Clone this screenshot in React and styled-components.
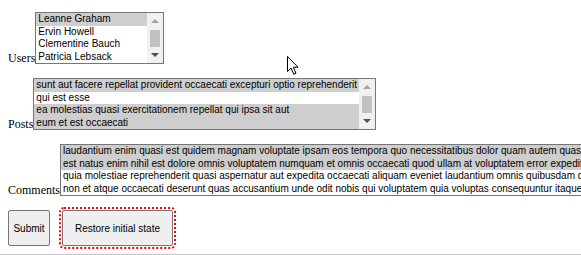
import styled, { createGlobalStyle } from "styled-components"

const GlobalStyle = createGlobalStyle`
  html, body {
    margin: 0;
    overflow: hidden;
    background: #fff;
  }
`

const Page = styled.div`
  position: relative;
  box-sizing: border-box;
  height: 255px;
  padding: 12px 8px 0;
  border-bottom: 1px solid #c6c6c6;
  display: flex;
  flex-direction: column;
  gap: 14px;
  overflow: hidden;
`

const Field = styled.div`
  display: flex;
  align-items: flex-end;
`

const Label = styled.span`
  font-family: "Liberation Serif", "Times New Roman", serif;
  font-size: 12px;
  line-height: 12px;
  color: #000;
  white-space: nowrap;
`

const ListBox = styled.div`
  box-sizing: border-box;
  flex: none;
  display: flex;
  width: ${(p) => p.$width}px;
  height: 52px;
  border: 1px solid #767676;
  background: #fff;
  overflow: hidden;
`

const Options = styled.div`
  flex: 1;
  min-width: 0;
  overflow: hidden;
`

const Option = styled.div`
  font-family: "Liberation Sans", Arial, sans-serif;
  font-size: 10px;
  line-height: 12.5px;
  height: 12.5px;
  padding: 0 2px;
  white-space: nowrap;
  color: #000;
  background: ${(p) => (p.$selected ? "#cecece" : "transparent")};
`

const ScrollBar = styled.div`
  flex: none;
  width: 16px;
  display: flex;
  flex-direction: column;
  background: #f1f1f1;
`

const ArrowButton = styled.div`
  height: 16px;
  display: flex;
  align-items: center;
  justify-content: center;

  &::after {
    content: "";
    width: 0;
    height: 0;
    border-left: 4px solid transparent;
    border-right: 4px solid transparent;
    ${(p) =>
      p.$down
        ? "border-top: 4px solid #505050;"
        : "border-bottom: 4px solid #a3a3a3;"}
  }
`

const Track = styled.div`
  flex: 1;
  padding: 1px 3px 0;
`

const Thumb = styled.div`
  height: 17px;
  background: #c1c1c1;
`

const ButtonRow = styled.div`
  display: flex;
  gap: 12px;
`

const Button = styled.button`
  box-sizing: border-box;
  width: ${(p) => p.$width}px;
  height: 36px;
  padding: 0;
  font-family: "Liberation Sans", Arial, sans-serif;
  font-size: 10px;
  color: #000;
  background: #efefef;
  border: 1px solid #767676;
  border-radius: 2px;
  ${(p) => p.$focused && "outline: 2px dotted #ff0000; outline-offset: 1px;"}
`

const Cursor = styled.svg`
  position: absolute;
  left: 287px;
  top: 56px;
`

const users = ["Leanne Graham", "Ervin Howell", "Clementine Bauch", "Patricia Lebsack"]

const posts = [
  { text: "sunt aut facere repellat provident occaecati excepturi optio reprehenderit", sel: true },
  { text: "qui est esse", sel: false },
  { text: "ea molestias quasi exercitationem repellat qui ipsa sit aut", sel: true },
  { text: "eum et est occaecati", sel: true },
]

const comments = [
  { text: "laudantium enim quasi est quidem magnam voluptate ipsam eos tempora quo necessitatibus dolor quam autem quasi reiciendis et nam sapiente accusantium", sel: true },
  { text: "est natus enim nihil est dolore omnis voluptatem numquam et omnis occaecati quod ullam at voluptatem error expedita pariatur", sel: true },
  { text: "quia molestiae reprehenderit quasi aspernatur aut expedita occaecati aliquam eveniet laudantium omnis quibusdam delectus saepe quia accusamus maiores nam est", sel: false },
  { text: "non et atque occaecati deserunt quas accusantium unde odit nobis qui voluptatem quia voluptas consequuntur itaque dolor et qui rerum deleniti ut occaecati", sel: false },
]

const Scroll = () => (
  <ScrollBar>
    <ArrowButton />
    <Track>
      <Thumb />
    </Track>
    <ArrowButton $down />
  </ScrollBar>
)

const App = () => {
  return (
    <Page>
      <GlobalStyle />
      <Field>
        <Label>Users</Label>
        <ListBox $width={129}>
          <Options>
            {users.map((u, i) => (
              <Option key={u} $selected={i === 0}>{u}</Option>
            ))}
          </Options>
          <Scroll />
        </ListBox>
      </Field>
      <Field>
        <Label>Posts</Label>
        <ListBox $width={343}>
          <Options>
            {posts.map((p) => (
              <Option key={p.text} $selected={p.sel}>{p.text}</Option>
            ))}
          </Options>
          <Scroll />
        </ListBox>
      </Field>
      <Field>
        <Label>Comments</Label>
        <ListBox $width={760}>
          <Options>
            {comments.map((c) => (
              <Option key={c.text} $selected={c.sel}>{c.text}</Option>
            ))}
          </Options>
          <Scroll />
        </ListBox>
      </Field>
      <ButtonRow>
        <Button $width={42}>Submit</Button>
        <Button $width={111} $focused>Restore initial state</Button>
      </ButtonRow>
      <Cursor width="13" height="20" viewBox="0 0 13 20">
        <path
          d="M0.5 0.5 L0.5 15.5 L4 12 L6.8 18.3 L9 17.3 L6.3 11.2 L11 11.2 Z"
          fill="#fff"
          stroke="#000"
          strokeWidth="1"
          strokeLinejoin="miter"
        />
      </Cursor>
    </Page>
  )
}

export default App
